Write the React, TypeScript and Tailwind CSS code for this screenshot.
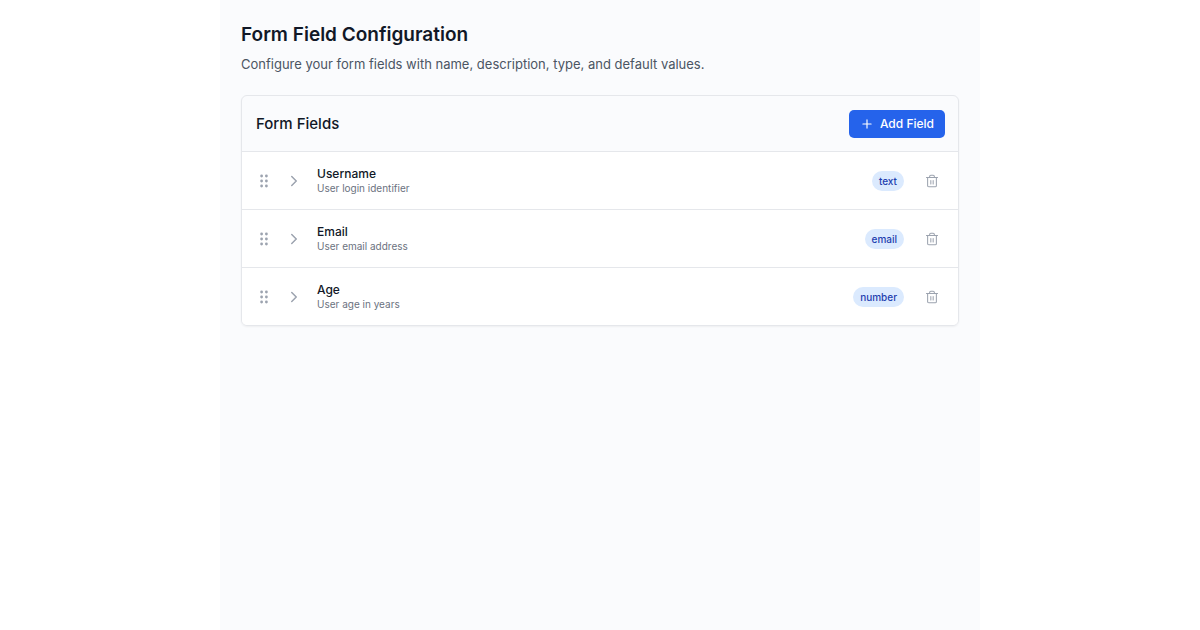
import { useState } from 'react';
import { ChevronRight, Plus } from 'lucide-react';

type Field = {
    id: number;
    name: string;
    description: string;
    type: string;
};

const initialFields: Field[] = [
    { id: 1, name: 'Username', description: 'User login identifier', type: 'text' },
    { id: 2, name: 'Email', description: 'User email address', type: 'email' },
    { id: 3, name: 'Age', description: 'User age in years', type: 'number' },
];

function DragHandle() {
    return (
        <svg viewBox="0 0 14 14" className="size-3.5" fill="currentColor" aria-hidden="true">
            {[2, 7, 12].map((cy) => (
                <g key={cy}>
                    <circle cx="4.6" cy={cy} r="1.4" />
                    <circle cx="9.4" cy={cy} r="1.4" />
                </g>
            ))}
        </svg>
    );
}

function TrashIcon() {
    return (
        <svg
            viewBox="0 0 24 24"
            className="size-3.5"
            fill="none"
            stroke="currentColor"
            strokeWidth="1.8"
            strokeLinecap="round"
            strokeLinejoin="round"
            aria-hidden="true">
            <path d="M2.5 6h19" />
            <path d="M19.5 6v14a2 2 0 0 1-2 2h-11a2 2 0 0 1-2-2V6" />
            <path d="M8 6V4a2 2 0 0 1 2-2h4a2 2 0 0 1 2 2v2" />
            <path d="M10 11v6M14 11v6" />
        </svg>
    );
}

function FieldRow({ field, onDelete }: { field: Field; onDelete: () => void }) {
    return (
        <li className="flex items-center bg-white py-3.5 pr-[19px] pl-[15px]">
            <button type="button" aria-label={`Reorder ${field.name}`} className="cursor-grab text-[#9ca3af]">
                <DragHandle />
            </button>
            <button type="button" aria-label={`Expand ${field.name}`} className="ml-3.5 text-[#9ca3af]">
                <ChevronRight className="size-[18px]" strokeWidth={2} />
            </button>
            <div className="ml-3.5 min-w-0 flex-1">
                <h3 className="text-[12px] leading-[15px] font-medium text-[#111827]">{field.name}</h3>
                <p className="text-[10px] leading-[14px] text-[#6b7280]">{field.description}</p>
            </div>
            <span className="rounded-full bg-[#dbeafe] px-[7px] py-0.5 text-[10px] leading-4 font-medium text-[#1e40af]">
                {field.type}
            </span>
            <button type="button" aria-label={`Delete ${field.name}`} onClick={onDelete} className="ml-[21px] text-[#9ca3af]">
                <TrashIcon />
            </button>
        </li>
    );
}

export default function App() {
    const [fields, setFields] = useState(initialFields);

    const addField = () => {
        setFields((prev) => [...prev, { id: Date.now(), name: 'New Field', description: 'Field description', type: 'text' }]);
    };

    const deleteField = (id: number) => {
        setFields((prev) => prev.filter((field) => field.id !== id));
    };

    return (
        <div className="min-h-screen bg-white font-['Inter',sans-serif]">
            <main className="mx-auto min-h-screen max-w-[760px] bg-[#fafbfd] px-[21px] py-[21px]">
                <h1 className="text-[19px] leading-7 font-semibold text-[#111827]">Form Field Configuration</h1>
                <p className="mt-[5px] text-[13px] leading-5 text-[#4b5563]">
                    Configure your form fields with name, description, type, and default values.
                </p>

                {/* Field list */}
                <section className="mt-[21px] overflow-hidden rounded-md border border-[#e5e7eb] shadow-xs">
                    <div className="flex items-center justify-between border-b border-[#e5e7eb] pt-3.5 pr-[13px] pb-[13px] pl-3.5">
                        <h2 className="text-[15px] leading-6 font-medium text-[#111827]">Form Fields</h2>
                        <button
                            type="button"
                            onClick={addField}
                            className="flex items-center gap-1.5 rounded-[5px] bg-[#2563eb] px-[11px] py-1.5 text-[12px] leading-4 font-medium text-white hover:bg-blue-700">
                            <Plus className="size-3.5" strokeWidth={2} />
                            Add Field
                        </button>
                    </div>
                    <ul className="divide-y divide-[#e5e7eb]">
                        {fields.map((field) => (
                            <FieldRow key={field.id} field={field} onDelete={() => deleteField(field.id)} />
                        ))}
                    </ul>
                </section>
            </main>
        </div>
    );
}
